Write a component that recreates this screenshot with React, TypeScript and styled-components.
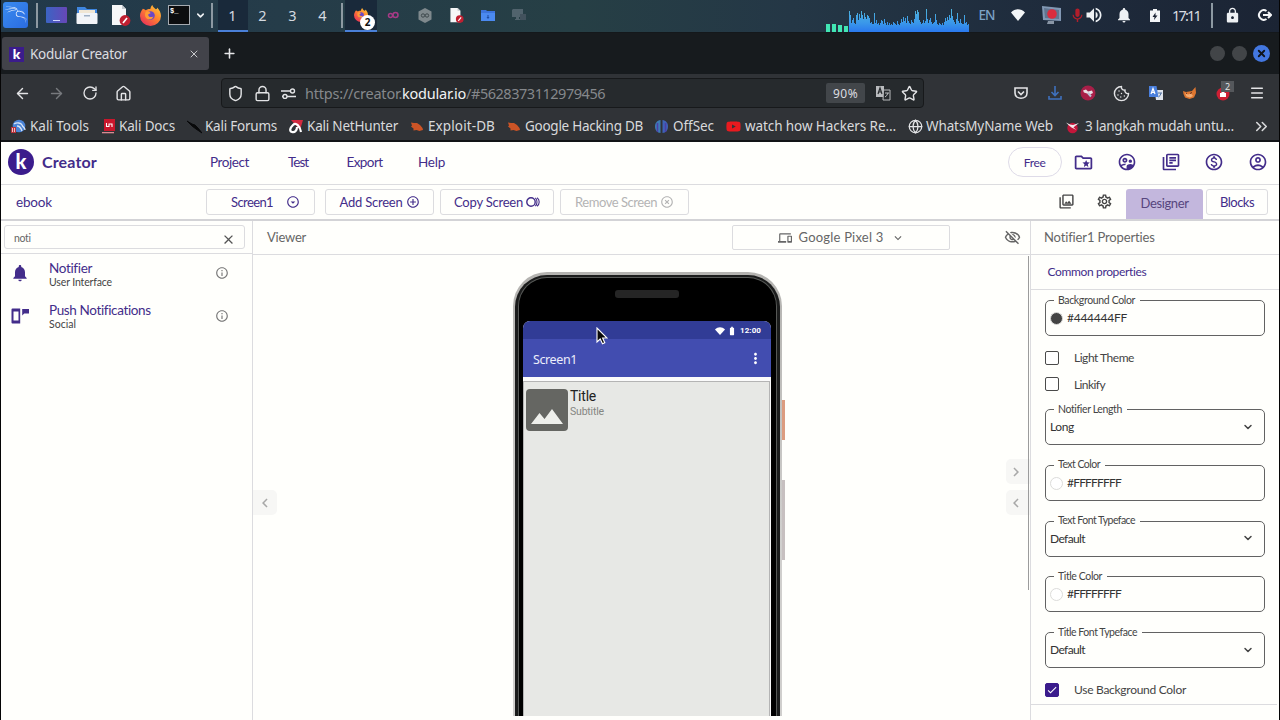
import React, { useLayoutEffect, useRef, useState } from "react";
import styled, { createGlobalStyle } from "styled-components";
import {
  ArrowLeft, ArrowRight, RotateCw, House, Shield, Lock, Star, Globe, Menu,
  ChevronsRight, X, Plus, ChevronDown, Cookie,
} from "lucide-react";
import {
  MdOutlineFolderSpecial, MdOutlineSupervisedUserCircle, MdOutlineLibraryBooks,
  MdOutlineMonetizationOn, MdOutlineAccountCircle, MdOutlinePhotoLibrary,
  MdOutlineSettings, MdOutlineVisibilityOff, MdDevices, MdExpandMore,
  MdNotifications, MdInfoOutline, MdAddCircleOutline, MdHighlightOff, MdClose,
  MdOutlineArrowDropDownCircle, MdChevronLeft, MdChevronRight, MdMoreVert,
  MdBatteryFull, MdLock, MdVolumeUp, MdMic, MdCheck,
} from "react-icons/md";
import { SiKalilinux } from "react-icons/si";
import { FaYoutube } from "react-icons/fa";

const ui = `"Noto Sans", sans-serif`;
const geo = `Lato, "Liberation Sans", sans-serif`;
const purple = "#432d8a";
const line = "#dcdcdf";
const paper = "#fffffc";

const Global = createGlobalStyle`
  *, *::before, *::after { box-sizing: border-box; }
  body { margin: 0; background: #000; overflow: hidden; }
  svg { display: block; flex: none; }
`;

/* ---------- text ---------- */

type TextProps = {
  $w: number; $size: number; $color?: string; $weight?: number; $font?: string; $ml?: number;
};

const TextBox = styled.span<TextProps>`
  display: block;
  flex: none;
  width: ${(p) => p.$w}px;
  margin-left: ${(p) => p.$ml ?? 0}px;
  font: ${(p) => p.$weight ?? 400} ${(p) => p.$size}px/1.25 ${(p) => p.$font ?? geo};
  color: ${(p) => p.$color ?? purple};
  white-space: nowrap;
`;

/* Tracks the label in or out so that it fills its column exactly. */
function Text({ children, ...rest }: TextProps & { children: string }) {
  const ref = useRef<HTMLSpanElement>(null);
  const [track, setTrack] = useState(0);
  useLayoutEffect(() => {
    const natural = ref.current!.getBoundingClientRect().width;
    setTrack((rest.$w - natural) / children.length);
  }, [children, rest.$w, rest.$size]);
  return (
    <TextBox {...rest}>
      <span ref={ref} style={{ letterSpacing: track }}>{children}</span>
    </TextBox>
  );
}

/* ---------- shell ---------- */

const Screen = styled.div`
  width: 1280px;
  height: 720px;
  border: solid #050505;
  border-width: 0 1px;
  display: flex;
  flex-direction: column;
  overflow: hidden;
`;

/* ---------- desktop panel ---------- */

const DesktopPanel = styled.div`
  flex: none;
  height: 33px;
  display: flex;
  align-items: stretch;
  border-bottom: 1px solid #14181b;
  background: linear-gradient(90deg, #22394a 0%, #253c49 22%, #263f45 45%, #243746 62%, #1f2c3d 80%, #1b2434 100%);
`;

const PanelCell = styled.div<{ $w: number; $active?: boolean; $flush?: boolean }>`
  position: relative;
  width: ${(p) => p.$w}px;
  flex: none;
  display: flex;
  align-items: ${(p) => (p.$flush ? "flex-end" : "center")};
  justify-content: center;
  color: #eef1f4;
  font: 15px ${ui};
  background: ${(p) => (p.$active ? "#19293a" : "transparent")};
  border-bottom: ${(p) => (p.$flush ? 0 : 2)}px solid ${(p) => (p.$active ? "#4a80d8" : "transparent")};
`;

const Workspace = styled(PanelCell)`
  padding-right: 1px;
  color: #d4dae0;
  font-size: 14.5px;
`;

const PanelRule = styled.div`
  width: 2px;
  height: 25px;
  background: #8d99a2;
`;

const Spacer = styled.div`flex: 1;`;

const KaliTile = styled.div`
  width: 25px;
  height: 26px;
  border-radius: 3px;
  background: linear-gradient(135deg, #3a8cf0, #2a6be0);
  color: #fff;
  display: grid;
  place-items: center;
`;

const DesktopTile = styled.div`
  width: 21px;
  height: 16px;
  border-radius: 1px;
  background: linear-gradient(90deg, #3b64c4, #6747b8);
  display: flex;
  align-items: flex-end;
  justify-content: center;
  padding-bottom: 2px;
  &::after { content: ""; width: 7px; height: 1px; background: #cfd6ff; }
`;

const TerminalTile = styled.div`
  width: 22px;
  height: 20px;
  border: 1px solid #a5aab0;
  background: #0c0d0f;
  color: #fff;
  font: 700 7px/9px "Liberation Mono", monospace;
  padding: 1px;
`;

const CountBadge = styled.div`
  position: absolute;
  left: 15px;
  top: 15px;
  width: 15px;
  height: 15px;
  border-radius: 50%;
  background: #fff;
  color: #111;
  font: 700 10px/15px ${ui};
  text-align: center;
`;

const CpuBars = styled.div`
  width: 23px;
  display: flex;
  align-items: flex-end;
  gap: 2px;
`;

const CpuBar = styled.i<{ $h: number }>`
  width: 4px;
  height: ${(p) => p.$h}px;
  background: #42e6b4;
`;

const load = [
  21, 17, 9, 12, 14, 9, 8, 17, 19, 12, 18, 14, 21, 17, 13, 19, 15, 13, 17, 16, 14, 9, 10, 8, 8, 19, 9, 12, 8, 9,
  7, 9, 12, 11, 8, 13, 9, 7, 10, 7, 9, 7, 8, 7, 10, 9, 8, 7, 11, 8, 7, 9, 13, 10, 15, 11, 14, 9, 16, 11,
  9, 8, 12, 10, 9, 13, 21, 18, 22, 20, 12, 10, 8, 9, 12, 9, 11, 23, 13, 9, 12, 14, 10, 8, 9, 10, 18, 12, 8, 7,
  9, 8, 7, 9, 7, 10, 14, 11, 15, 12, 17, 14, 23, 16, 12, 10, 8, 13, 19, 11, 9, 13, 9, 8, 8, 17, 9, 10, 7, 8,
];

function CpuGraph() {
  const d = load.map((h, i) => `L${i} ${24 - h}L${i + 1} ${24 - h}`).join("");
  return (
    <svg width="120" height="24" viewBox="0 0 120 24">
      <defs>
        <linearGradient id="cpu" x1="0" y1="0" x2="0" y2="1">
          <stop offset="0" stopColor="#4fb4dc" />
          <stop offset="0.6" stopColor="#3a98ea" />
          <stop offset="1" stopColor="#2a78ee" />
        </linearGradient>
      </defs>
      <path d={`M0 24${d}L120 24Z`} fill="url(#cpu)" />
    </svg>
  );
}

const FolderArt = () => (
  <svg width="22" height="20" viewBox="0 0 22 20">
    <path d="M1 2h8l2 2h10v6H1z" fill="#3f86e0" />
    <rect x="3" y="5" width="16" height="6" fill="#f0e6d4" />
    <rect x="0.500" y="8" width="21" height="11" rx="1" fill="#f2f4f8" />
    <rect x="8" y="10" width="6" height="1.500" fill="#9fb0c4" />
  </svg>
);

const DocArt = ({ size = 21 }: { size?: number }) => (
  <svg width={size} height={size} viewBox="0 0 21 21">
    <path d="M2 0h10l4 4v16H2z" fill="#f6f7f8" />
    <path d="M12 0l4 4h-4z" fill="#c5cacf" />
    <circle cx="15" cy="15.500" r="5.400" fill="#c01f31" />
    <path d="M13 18l4-5" stroke="#fff" strokeWidth="1.600" />
  </svg>
);

const FirefoxArt = ({ size = 21 }: { size?: number }) => (
  <svg width={size} height={size} viewBox="0 0 22 22">
    <defs>
      <linearGradient id="fx" x1="1" y1="0" x2="0.200" y2="1">
        <stop offset="0" stopColor="#ffd43a" />
        <stop offset="0.500" stopColor="#ff8030" />
        <stop offset="1" stopColor="#e8305a" />
      </linearGradient>
    </defs>
    <path d="M3 4c1 0 2 .6 3 1.500C8 4 10 4.500 11 4c0-1.500.8-3 2-4 .2 2 2 3 3.500 4.500C18 4 18 3 18 2.500c2.500 2.500 4 5.500 4 9A11 10.500 0 0 1 0 11.500C0 8.500 1.500 6 3 4z" fill="url(#fx)" />
    <circle cx="11" cy="11" r="4.500" fill="#6a48c8" />
    <path d="M6 7c2-1 5 0 5 2-2 0-3 1-2 2.500 1.500 2 4 1 5 .5-1 4-7 4-8.500 0C5 10 5.500 8 6 7z" fill="#ff9a35" />
  </svg>
);

const Desktop = () => (
  <DesktopPanel>
    <PanelCell $w={29}><KaliTile><SiKalilinux size={22} /></KaliTile></PanelCell>
    <PanelCell $w={13}><PanelRule /></PanelCell>
    <PanelCell $w={27}><DesktopTile /></PanelCell>
    <PanelCell $w={33}><FolderArt /></PanelCell>
    <PanelCell $w={34}><DocArt /></PanelCell>
    <PanelCell $w={27}><FirefoxArt /></PanelCell>
    <PanelCell $w={30}><TerminalTile>$_</TerminalTile></PanelCell>
    <PanelCell $w={12}><ChevronDown size={11} strokeWidth={3.500} /></PanelCell>
    <PanelCell $w={12}><PanelRule /></PanelCell>
    <Workspace $w={30} $active>1</Workspace>
    <Workspace $w={30}>2</Workspace>
    <Workspace $w={30}>3</Workspace>
    <Workspace $w={30}>4</Workspace>
    <PanelCell $w={7}><PanelRule /></PanelCell>
    <PanelCell $w={32} $active><FirefoxArt size={14} /><CountBadge>2</CountBadge></PanelCell>
    <PanelCell $w={32}>
      <svg width="12" height="12" viewBox="0 0 12 12" fill="none" stroke="#a63a86" strokeWidth="1.500">
        <circle cx="3.500" cy="6.500" r="2" /><circle cx="8.500" cy="6" r="2.500" />
      </svg>
    </PanelCell>
    <PanelCell $w={31}>
      <svg width="14" height="15" viewBox="0 0 14 15">
        <path d="M7 0l6.500 3.500v8L7 15 .5 11.500v-8z" fill="#7f898d" />
        <circle cx="5" cy="7.500" r="1.700" fill="none" stroke="#3d484c" /><circle cx="9" cy="7.500" r="1.700" fill="none" stroke="#3d484c" />
      </svg>
    </PanelCell>
    <PanelCell $w={33}><DocArt size={15} /></PanelCell>
    <PanelCell $w={29}>
      <svg width="14" height="12" viewBox="0 0 14 12">
        <path d="M0 1h5l1 1h8v10H0z" fill="#3c74dc" /><path d="M0 4h14v8H0z" fill="#4b8af0" /><path d="M5.500 8h3L7 10z M6.500 6h1v2h-1z" fill="#1d4aa0" />
      </svg>
    </PanelCell>
    <PanelCell $w={35}>
      <svg width="15" height="13" viewBox="0 0 15 13" fill="#51636d">
        <path d="M1 0h10v8H7v2h1v1H3v-1h1V8H0V1z" /><path d="M8 5h6v6H8z" fill="#42525d" />
      </svg>
    </PanelCell>
    <Spacer />
    <CpuBars><CpuBar $h={8} /><CpuBar $h={8} /><CpuBar $h={7} /><CpuBar $h={6} /></CpuBars>
    <PanelCell $w={120} $flush><CpuGraph /></PanelCell>
    <PanelCell $w={35}><Text $w={16} $size={13.500} $weight={500} $font={ui} $color="#7ba2c6">EN</Text></PanelCell>
    <PanelCell $w={28}>
      <svg width="14" height="12" viewBox="0 0 14 12"><path d="M7 12L0 3.500C4-.8 10-.8 14 3.500z" fill="#f3f5f7" /></svg>
    </PanelCell>
    <PanelCell $w={39}>
      <svg width="20" height="19" viewBox="0 0 20 19">
        <path d="M0 0l19 2v13L1 14z" fill="#8298b4" /><path d="M2 2l15 2v9L3 12z" fill="#61758f" />
        <circle cx="10" cy="8" r="4.800" fill="#db2c3d" /><path d="M6 15h6v3H5z" fill="#8995a5" />
      </svg>
    </PanelCell>
    <PanelCell $w={12}><MdMic size={17} color="#b31e2b" /></PanelCell>
    <PanelCell $w={22}><MdVolumeUp size={20} /></PanelCell>
    <PanelCell $w={37}><MdNotifications size={18} /></PanelCell>
    <PanelCell $w={26}>
      <svg width="10" height="13" viewBox="0 0 10 13">
        <path d="M3 0h4v1.500h3V13H0V1.500h3z" fill="#f3f5f7" /><path d="M5.500 3.500L2.500 8h2l-.5 3L7.500 6.500h-2z" fill="#1d2535" />
      </svg>
    </PanelCell>
    <PanelCell $w={36}><Text $w={28} $size={14.5} $font={ui} $color="#d9dde2">17:11</Text></PanelCell>
    <PanelCell $w={16}><PanelRule /></PanelCell>
    <PanelCell $w={24}><MdLock size={17} /></PanelCell>
    <PanelCell $w={35}>
      <svg width="20" height="12" viewBox="-6 0 20 12" fill="none" stroke="#f3f5f7" strokeWidth="2">
        <path d="M8.500 2A4.800 4.800 0 1 0 8.500 10" /><path d="M5 6h8M10 3l3 3-3 3" />
      </svg>
    </PanelCell>
  </DesktopPanel>
);

/* ---------- browser chrome ---------- */

const TabStrip = styled.div`
  flex: none;
  height: 41px;
  background: #171b1e;
  display: flex;
  align-items: center;
  padding: 0 9px 0 1px;
  color: #e6e7e9;
`;

const Tab = styled.div`
  width: 207px;
  height: 33px;
  border-radius: 3px;
  background: #42434a;
  display: flex;
  align-items: center;
  padding: 1px 9px 0 7px;
  margin-right: 13px;
`;

const Favicon = styled.div`
  width: 15px;
  height: 15px;
  background: #3b1c8c;
  color: #fff;
  font: 900 14px/14px ${geo};
  text-align: center;
`;

const WindowDot = styled.div<{ $close?: boolean }>`
  width: ${(p) => (p.$close ? 17 : 15)}px;
  height: ${(p) => (p.$close ? 17 : 15)}px;
  margin-left: ${(p) => (p.$close ? 6 : 7)}px;
  border-radius: 50%;
  display: grid;
  place-items: center;
  background: ${(p) => (p.$close ? "#4377e0" : "#424548")};
  color: #10151c;
`;

const NavBar = styled.div`
  flex: none;
  height: 37px;
  background: #303337;
  display: flex;
  align-items: center;
  padding: 1px 0 0 5px;
  color: #e3e4e6;
`;

const NavSlot = styled.div<{ $w?: number; $dim?: boolean }>`
  position: relative;
  width: ${(p) => p.$w ?? 33.7}px;
  flex: none;
  display: grid;
  place-items: center;
  color: ${(p) => (p.$dim ? "#777a7e" : "inherit")};
`;

const Extensions = styled.div`
  display: flex;
  align-items: center;
  margin-left: 80px;
`;

const UrlBox = styled.div`
  width: 703px;
  height: 30px;
  margin-left: 81px;
  border: 1px solid #17191b;
  border-radius: 4px;
  background: #262a2d;
  display: flex;
  align-items: center;
`;

const ZoomPill = styled.div`
  width: 39px;
  height: 20px;
  margin-left: 221px;
  border-radius: 2px;
  background: #42464a;
  display: flex;
  align-items: center;
  justify-content: center;
`;

const MiniBadge = styled.div`
  position: absolute;
  left: 15px;
  top: -5px;
  width: 13px;
  height: 11px;
  background: #55585c;
  font: 9px/11px ${ui};
  text-align: center;
`;

const Bookmarks = styled.div`
  flex: none;
  height: 31px;
  background: #303337;
  border-bottom: 2px solid #121416;
  display: flex;
  align-items: center;
  padding: 1px 0 0 10px;
`;

const BookmarkIcon = styled.div`
  width: 15px;
  height: 15px;
  flex: none;
  display: grid;
  place-items: center;
  color: #e3e4e6;
`;

const BookmarkItem = styled.div<{ $gap: number }>`
  display: flex;
  align-items: center;
  margin-left: ${(p) => p.$gap}px;
`;

const Blob = ({ kind }: { kind: string }) => (
  <svg width="15" height="15" viewBox="0 0 15 15">
    {kind === "tools" && (<>
      <circle cx="8" cy="7" r="6.300" fill="#4a83d6" />
      <path d="M3 5c3-2 7-1 8 1 1 3 3 2 3 5M6 7c3 0 4 2 5 5" stroke="#d7e4f7" strokeWidth="1.300" fill="none" />
      <path d="M0 8h5v6H0z" fill="#b8323c" /><path d="M1.500 9v4M3.500 9v4" stroke="#fff" strokeWidth=".7" />
    </>)}
    {kind === "docs" && (<>
      <path d="M3 0h11v12H3z" fill="#c9172c" /><path d="M1 13h12v1.300H1z" fill="#d98a92" />
      <path d="M5.500 4v3.500H8V5h3v3" stroke="#fff" strokeWidth="1.100" fill="none" />
    </>)}
    {kind === "forums" && <path d="M0 2l5 3 3 1 3 3 4 5-6-4-4-3z" fill="#08090a" stroke="#08090a" strokeWidth="1" />}
    {kind === "net" && (<>
      <path d="M3 1h12L12 11z" fill="#d22a40" /><path d="M13 13C12 7 8 3 5 6s-4 6-1 7 5-2 5-5" stroke="#fff" strokeWidth="2.200" fill="none" />
    </>)}
    {kind === "bug" && <path d="M2 3.500l3 .5 3 0 3 2 2.500 3 .5 2-2 .5-1.500.5-3-1-3 .5 0-2-2.500-2 1-1z" fill="#cc5426" />}
    {kind === "off" && (<>
      <path d="M6.500 1v13C3 14 1 11 1 7.500S3 1.500 6.500 1z" fill="#3d7ab4" /><path d="M8.500 1v13c3.500 0 5.500-3 5.500-6.500S12 1.500 8.500 1z" fill="#3e63b8" />
      <path d="M3.500 4v9M11.500 4v9" stroke="#4b3fa6" strokeWidth="1.500" />
    </>)}
    {kind === "bird" && (<>
      <circle cx="7.500" cy="9" r="5.200" fill="#c3163a" />
      <path d="M1 3.500l4 2 3 .5 6-2-4.500 3.500-1 1 3 2.500-5-2.500-2.500-2z" fill="#f3e9ec" />
    </>)}
  </svg>
);

const bookmarks: { label: string; w: number; gap: number; kind: string; tg: number }[] = [
  { label: "Kali Tools", w: 59, gap: 0, kind: "tools", tg: 4 },
  { label: "Kali Docs", w: 56, gap: 12, kind: "docs", tg: 3 },
  { label: "Kali Forums", w: 72, gap: 12, kind: "forums", tg: 3 },
  { label: "Kali NetHunter", w: 91, gap: 11, kind: "net", tg: 4 },
  { label: "Exploit-DB", w: 67, gap: 11, kind: "bug", tg: 4 },
  { label: "Google Hacking DB", w: 118, gap: 11, kind: "bug", tg: 4 },
  { label: "OffSec", w: 41, gap: 11, kind: "off", tg: 4 },
  { label: "watch how Hackers Re…", w: 151, gap: 11.5, kind: "yt", tg: 4.5 },
  { label: "WhatsMyName Web", w: 127, gap: 12, kind: "globe", tg: 3 },
  { label: "3 langkah mudah untu…", w: 149, gap: 12, kind: "bird", tg: 5 },
];

const Browser = () => (
  <>
    <TabStrip>
      <Tab>
        <Favicon>k</Favicon>
        <Text $w={97} $size={13.5} $font={ui} $color="#dcdde0" $ml={6}>Kodular Creator</Text>
        <Spacer />
        <X size={12} strokeWidth={2} color="#c9cacd" />
      </Tab>
      <Plus size={15} strokeWidth={2.5} />
      <Spacer />
      <WindowDot /><WindowDot /><WindowDot $close><X size={11} strokeWidth={4} /></WindowDot>
    </TabStrip>
    <NavBar>
      <NavSlot><ArrowLeft size={17} /></NavSlot>
      <NavSlot $dim><ArrowRight size={17} /></NavSlot>
      <NavSlot><RotateCw size={16} /></NavSlot>
      <NavSlot $w={33}><House size={17} /></NavSlot>
      <UrlBox>
        <NavSlot $w={27}><Shield size={17} /></NavSlot>
        <NavSlot $w={26}><Lock size={17} /></NavSlot>
        <NavSlot $w={26}>
          <svg width="15" height="11" viewBox="0 0 15 11" fill="none" stroke="#e3e4e6" strokeWidth="1.400">
            <path d="M0 3h9M6 8.500h9M1 8.500h1" /><circle cx="11.500" cy="3" r="2" /><circle cx="4" cy="8.500" r="2" />
          </svg>
        </NavSlot>
        <Text $w={97} $size={14.5} $font={ui} $color="#85888c" $ml={4}>https://creator.</Text>
        <Text $w={64} $size={14.5} $font={ui} $color="#f1f2f3">kodular.io</Text>
        <Text $w={139} $size={14.5} $font={ui} $color="#85888c">/#5628373112979456</Text>
        <ZoomPill><Text $w={25} $size={12} $font={ui} $color="#dcdde0">90%</Text></ZoomPill>
        <NavSlot $w={36}>
          <svg width="16" height="16" viewBox="0 0 16 16">
            <path d="M1 1h8v11H1z" fill="#b9bbbe" /><path d="M3 9l2-6 2 6M3.500 7h3" stroke="#262a2d" strokeWidth="1.200" fill="none" />
            <path d="M8.500 5h6.500v10H8z" fill="#262a2d" stroke="#b9bbbe" /><path d="M10 8h4M13 8q-1 3-3 4M11 8" stroke="#b9bbbe" fill="none" />
          </svg>
        </NavSlot>
        <NavSlot $w={17}><Star size={17} /></NavSlot>
      </UrlBox>
      <Extensions>
        <NavSlot>
          <svg width="14" height="13" viewBox="0 0 14 13" fill="none" stroke="#e3e4e6" strokeWidth="1.600">
            <path d="M1 1h12v5c0 7-12 7-12 0z" /><path d="M4 4.500l3 3 3-3" />
          </svg>
        </NavSlot>
        <NavSlot>
          <svg width="14" height="14" viewBox="0 0 14 14" fill="none" stroke="#3f71bd" strokeWidth="1.600">
            <path d="M7 0v9M3.500 6L7 9.500 10.500 6M1 10v3h12v-3" />
          </svg>
        </NavSlot>
        <NavSlot>
          <svg width="16" height="16" viewBox="0 0 16 16">
            <circle cx="8" cy="8" r="7.500" fill="#a81f48" />
            <path d="M3 5.500l3-1 2 2 4-1 1 2.500-3 1.500-3-1-3-1z" fill="#e9dfe5" /><path d="M8 8l3 3.500" stroke="#b9c4d8" strokeWidth="2" />
          </svg>
        </NavSlot>
        <NavSlot><Cookie size={17} /></NavSlot>
        <NavSlot>
          <svg width="16" height="16" viewBox="0 0 16 16">
            <path d="M6.500 5H15v10H8z" fill="#dfe4ec" /><path d="M1 1h7.500l2 11H1z" fill="#4a7fdc" />
            <path d="M3 9l2-5.500L7 9M3.600 7.300h2.800" stroke="#fff" strokeWidth="1.200" fill="none" />
            <path d="M10 8h4M13 8q-.5 3-2.500 4" stroke="#51719f" fill="none" />
          </svg>
        </NavSlot>
        <NavSlot>
          <svg width="15" height="14" viewBox="0 0 15 14"><path d="M1 5l3 1 6-1 3.500-4L14 7l-2 4.500L7.500 13 3 11.500 1.500 8z" fill="#dd7630" /><path d="M3 7l3 1.500 3-1 2 2.500-3 1.500-3.500-1z" fill="#f3ad73" /><path d="M8 7.500l2-1M4 7l1 .6" stroke="#61301c" /></svg>
        </NavSlot>
        <NavSlot>
          <svg width="15" height="15" viewBox="0 0 15 15"><circle cx="7" cy="8" r="6.500" fill="#cd1f34" /><path d="M4 7h6v4H4zM5.500 5h3v2h-3z" fill="#fff" /></svg>
          <MiniBadge>2</MiniBadge>
        </NavSlot>
        <NavSlot><Menu size={16} strokeWidth={2.2} /></NavSlot>
      </Extensions>
    </NavBar>
    <Bookmarks>
      {bookmarks.map((b) => (
        <BookmarkItem key={b.label} $gap={b.gap}>
          <BookmarkIcon>
            {b.kind === "yt" ? <FaYoutube size={15} color="#e81a1f" /> : b.kind === "globe" ? <Globe size={15} /> : <Blob kind={b.kind} />}
          </BookmarkIcon>
          <Text $w={b.w} $size={13.5} $font={ui} $color="#d9dadc" $ml={b.tg}>{b.label}</Text>
        </BookmarkItem>
      ))}
      <NavSlot $w={54}><ChevronsRight size={19} color="#d9dadc" /></NavSlot>
    </Bookmarks>
  </>
);

/* ---------- creator app ---------- */

const AppArea = styled.div`
  flex: 1;
  min-height: 0;
  background: ${paper};
  display: flex;
  flex-direction: column;
`;

const Header = styled.header`
  flex: none;
  height: 43px;
  border-bottom: 1px solid ${line};
  display: flex;
  align-items: center;
  padding: 0 10px 2px 7px;
  color: ${purple};
`;

const Logo = styled.div`
  width: 26px;
  height: 26px;
  border-radius: 50%;
  background: #3b1c8c;
  color: #fff;
  font: 900 20px/24px ${geo};
  text-align: center;
`;

const FreePill = styled.div`
  width: 54px;
  height: 30px;
  border: 1px solid #dedbe8;
  border-radius: 15px;
  display: flex;
  align-items: center;
  justify-content: center;
  margin-right: 11px;
`;

const HeaderIcons = styled.div`
  display: flex;
  gap: 21.6px;
`;

const HeaderIcon = styled.div`
  width: 22px;
  display: grid;
  place-items: center;
`;

const ProjectBar = styled.div`
  flex: none;
  height: 36px;
  border-bottom: 2px solid #d3d3d6;
  display: flex;
  align-items: center;
  padding: 0 11px 0 15px;
`;

const OutlineButton = styled.div<{ $w: number; $ml: number; $gap?: number; $off?: boolean }>`
  width: ${(p) => p.$w}px;
  height: 26px;
  margin-left: ${(p) => p.$ml}px;
  border: 1px solid ${line};
  border-radius: 3px;
  display: flex;
  align-items: center;
  justify-content: center;
  gap: ${(p) => p.$gap ?? 3}px;
  color: ${(p) => (p.$off ? "#b4b4b4" : purple)};
`;

const BarIcons = styled.div`
  display: flex;
  align-items: center;
  gap: 21px;
  padding-bottom: 2px;
  color: #444;
`;

const ModeTab = styled.div`
  align-self: flex-end;
  width: 77px;
  height: 30px;
  margin-left: 13px;
  padding-bottom: 1px;
  border-radius: 3px 3px 0 0;
  background: #c3b7dd;
  display: flex;
  align-items: center;
  justify-content: center;
`;

const Columns = styled.div`
  flex: 1;
  min-height: 0;
  display: flex;
`;

const Palette = styled.aside`
  width: 252px;
  border-right: 1px solid ${line};
`;

const SearchRow = styled.div`
  height: 33px;
  padding: 4px 7px 0 3px;
  border-bottom: 1px solid ${line};
`;

const SearchBox = styled.div`
  height: 24px;
  border: 1px solid ${line};
  border-radius: 3px;
  display: flex;
  align-items: center;
  justify-content: space-between;
  padding: 4px 8px 0 9px;
`;

const PaletteList = styled.div`
  margin-top: -2px;
`;

const PaletteItem = styled.div`
  height: 42.4px;
  display: flex;
  align-items: center;
  padding: 0 23px 0 8px;
  color: ${purple};
`;

const PaletteIcon = styled.div`
  width: 22px;
  display: grid;
  place-items: center;
`;

const PaletteText = styled.div`
  flex: 1;
  padding: 2px 0 0 18px;
  display: flex;
  flex-direction: column;
  & > :last-child { margin-top: -1px; }
`;

const Viewer = styled.main`
  position: relative;
  width: 778px;
  border-right: 1px solid ${line};
`;

const ViewerHead = styled.div`
  height: 34px;
  border-bottom: 1px solid ${line};
  display: flex;
  align-items: center;
  padding: 0 9px 0 14px;
  color: #666;
`;

const DeviceSelect = styled.div`
  width: 218px;
  height: 25px;
  margin-left: 426px;
  border: 1px solid ${line};
  border-radius: 2px;
  display: flex;
  align-items: center;
  justify-content: center;
  gap: 7px;
`;

const Handle = styled.div<{ $side: "left" | "right"; $top: number }>`
  position: absolute;
  ${(p) => p.$side}: 0;
  top: ${(p) => p.$top}px;
  width: 24px;
  height: 25px;
  padding-right: ${(p) => (p.$side === "left" ? 0 : 4)}px;
  border-radius: ${(p) => (p.$side === "left" ? "0 5px 5px 0" : "5px 0 0 5px")};
  background: #f7f7f5;
  color: #a8a8a8;
  display: grid;
  place-items: center;
`;

const ScrollThumb = styled.div`
  position: absolute;
  right: 1px;
  top: 35px;
  width: 1px;
  height: 334px;
  background: #9c9c9c;
`;

const PhoneBody = styled.div`
  position: relative;
  width: 269px;
  height: 444px;
  margin: 17px 0 0 260px;
  padding: 3px 2px 0;
  border-radius: 34px 34px 0 0;
  background: linear-gradient(#b4b3b0, #d0cfcd 60%);
`;

const PhoneRim = styled.div`
  height: 100%;
  padding: 2px 3px 0;
  border-radius: 32px 32px 0 0;
  background: #1b1c1c;
`;

const PhoneRing = styled.div`
  height: 100%;
  padding: 1px 1px 0;
  border-radius: 29px 29px 0 0;
  background: #565856;
`;

const PhoneGlass = styled.div`
  height: 100%;
  padding: 12px 5px 0 4px;
  border-radius: 28px 28px 0 0;
  background: #000;
  display: flex;
  flex-direction: column;
`;

const Speaker = styled.div`
  flex: none;
  align-self: center;
  width: 64px;
  height: 8px;
  border-radius: 3px;
  background: #252525;
  margin-bottom: 23px;
`;

const SideButton = styled.div<{ $top: number; $h: number; $c: string }>`
  position: absolute;
  right: -3px;
  top: ${(p) => p.$top}px;
  width: 3px;
  height: ${(p) => p.$h}px;
  background: ${(p) => p.$c};
`;

const PhoneScreen = styled.div`
  flex: 1;
  background: #fbfbfb;
  border-radius: 7px 7px 0 0;
  overflow: hidden;
  display: flex;
  flex-direction: column;
`;

const StatusBar = styled.div`
  height: 18px;
  background: #313c96;
  display: flex;
  align-items: center;
  justify-content: flex-end;
  gap: 2px;
  padding: 2px 10px 0 0;
  color: #fff;
`;

const ActionBar = styled.div`
  height: 38px;
  background: #424db0;
  display: flex;
  align-items: center;
  justify-content: space-between;
  padding: 0 7px 0 10px;
  color: #fff;
  & > :first-child { margin-top: 3px; }
`;

const Canvas = styled.div`
  flex: 1;
  margin: 4px 1px 0 0;
  border: 1px solid #b4b4b4;
  border-bottom: 0;
  background: #e7e8e5;
  display: flex;
  align-items: flex-start;
  gap: 2px;
  padding: 7px 2px;
`;

const Thumb = styled.div`
  width: 42px;
  height: 42px;
  border-radius: 4px;
  background: #656662;
  display: grid;
  place-items: end center;
  padding-bottom: 6px;
`;

const ThumbText = styled.div`
  margin-top: -1.5px;
`;

const Pointer = styled.svg`
  position: absolute;
  left: 343px;
  top: 106px;
`;

const Properties = styled.aside`
  flex: 1;
`;

const PropHead = styled.div`
  height: 34px;
  border-bottom: 1px solid ${line};
  display: flex;
  align-items: center;
  padding-left: 13px;
`;

const PropSection = styled.div`
  height: 35px;
  border-bottom: 1px solid ${line};
  display: flex;
  align-items: center;
  padding: 0 0 2px 16.5px;
`;

const PropList = styled.div`
  height: 415px;
  margin-right: 2px;
  padding: 10px 12px 0 13px;
  border-bottom: 1px solid ${line};
`;

const Field = styled.div`
  position: relative;
  height: 36px;
  margin: 0 0 19.7px 1px;
  width: 220px;
  border: 1px solid #626262;
  border-radius: 5px;
  display: flex;
  align-items: center;
  padding: 0 10px 1px 4px;
`;

const FieldLabel = styled.div`
  position: absolute;
  top: -7.5px;
  left: 8px;
  padding: 0 5px 0 4px;
  background: ${paper};
`;

const Swatch = styled.div<{ $c: string }>`
  width: 13px;
  height: 13px;
  border-radius: 50%;
  background: ${(p) => p.$c};
  border: 1px solid #dcdcda;
  margin-right: 4px;
  margin-top: 2px;
`;

const CheckRow = styled.div`
  height: 26.5px;
  display: flex;
  align-items: center;
`;

const Checks = styled.div`margin: -11.2px 0 11.8px;`;

const Box = styled.div<{ $on?: boolean }>`
  width: 14px;
  height: 14px;
  border: 1px solid ${(p) => (p.$on ? "#3b1c8c" : "#4a4a4a")};
  border-radius: 2px;
  background: ${(p) => (p.$on ? "#3b1c8c" : "#fff")};
  color: #fff;
  margin: 0 15px 0 1px;
  display: grid;
  place-items: center;
`;

type FieldData = { label: string; lw: number; value: string; vw: number; color?: string };

const PropField = ({ label, lw, value, vw, color }: FieldData) => (
  <Field>
    <FieldLabel><Text $w={lw} $size={10.5} $color="#444">{label}</Text></FieldLabel>
    {color && <Swatch $c={color} />}
    <Text $w={vw} $size={12} $color="#333">{value}</Text>
    <Spacer />
    {!color && <ChevronDown size={12} strokeWidth={3} color="#444" />}
  </Field>
);

const fields: FieldData[] = [
  { label: "Notifier Length", lw: 64, value: "Long", vw: 24 },
  { label: "Text Color", lw: 42, value: "#FFFFFFFF", vw: 54, color: "#fff" },
  { label: "Text Font Typeface", lw: 77, value: "Default", vw: 35 },
  { label: "Title Color", lw: 44, value: "#FFFFFFFF", vw: 54, color: "#fff" },
  { label: "Title Font Typeface", lw: 79, value: "Default", vw: 35 },
];

const PushIcon = () => (
  <svg width="18" height="16" viewBox="0 0 18 16">
    <path d="M1.500 0.500H9.200v15H1.500a1 1 0 0 1-1-1v-13a1 1 0 0 1 1-1zM2.500 3.500v9h5v-9z" fillRule="evenodd" fill={purple} />
    <path d="M11.200 1h6.800v4.500h-4.800l-2 2z" fill={purple} />
  </svg>
);

const CopyIcon = () => (
  <svg width="14" height="12" viewBox="0 0 14 12" fill="none" stroke={purple} strokeWidth="1.400">
    <circle cx="5" cy="6" r="4.200" /><path d="M9.300 1.800q1.700 1.500 1.700 4.200t-1.700 4.200M11 1.800q2.200 1.500 2.200 4.200t-2.200 4.200" strokeWidth="1.100" />
  </svg>
);

const menu = [
  { label: "Project", w: 39, ml: 113 },
  { label: "Test", w: 20, ml: 39 },
  { label: "Export", w: 36, ml: 38.5 },
  { label: "Help", w: 27, ml: 35.5 },
];

const Creator = () => (
  <AppArea>
    <Header>
      <Logo>k</Logo>
      <Text $w={55} $size={16} $weight={700} $ml={8}>Creator</Text>
      {menu.map((m) => <Text key={m.label} $w={m.w} $size={13.5} $ml={m.ml}>{m.label}</Text>)}
      <Spacer />
      <FreePill><Text $w={22} $size={12}>Free</Text></FreePill>
      <HeaderIcons>
        <HeaderIcon><MdOutlineFolderSpecial size={21} /></HeaderIcon>
        <HeaderIcon><MdOutlineSupervisedUserCircle size={20} /></HeaderIcon>
        <HeaderIcon><MdOutlineLibraryBooks size={20} /></HeaderIcon>
        <HeaderIcon><MdOutlineMonetizationOn size={20} /></HeaderIcon>
        <HeaderIcon><MdOutlineAccountCircle size={20} /></HeaderIcon>
      </HeaderIcons>
    </Header>
    <ProjectBar>
      <Text $w={36} $size={13.5}>ebook</Text>
      <OutlineButton $w={109} $ml={154} $gap={13}>
        <Text $w={42} $size={13} $ml={10}>Screen1</Text><MdOutlineArrowDropDownCircle size={14} />
      </OutlineButton>
      <OutlineButton $w={109} $ml={10}>
        <Text $w={63} $size={13}>Add Screen</Text><MdAddCircleOutline size={14} />
      </OutlineButton>
      <OutlineButton $w={114} $ml={6}>
        <Text $w={69} $size={13}>Copy Screen</Text><CopyIcon />
      </OutlineButton>
      <OutlineButton $w={129} $ml={6} $off>
        <Text $w={82} $size={13} $color="#b4b4b4">Remove Screen</Text><MdHighlightOff size={14} />
      </OutlineButton>
      <Spacer />
      <BarIcons><MdOutlinePhotoLibrary size={17} /><MdOutlineSettings size={17} /></BarIcons>
      <ModeTab><Text $w={48} $size={13} $color="#57467e">Designer</Text></ModeTab>
      <OutlineButton $w={62} $ml={3}><Text $w={34} $size={13}>Blocks</Text></OutlineButton>
    </ProjectBar>
    <Columns>
      <Palette>
        <SearchRow>
          <SearchBox>
            <Text $w={17} $size={10.5} $color="#666">noti</Text>
            <MdClose size={15} color="#555" />
          </SearchBox>
        </SearchRow>
        <PaletteList>
          <PaletteItem>
            <PaletteIcon><MdNotifications size={20} /></PaletteIcon>
            <PaletteText>
              <Text $w={43} $size={13.5}>Notifier</Text>
              <Text $w={63} $size={10.5} $color="#444">User Interface</Text>
            </PaletteText>
            <MdInfoOutline size={14} color="#777" />
          </PaletteItem>
          <PaletteItem>
            <PaletteIcon><PushIcon /></PaletteIcon>
            <PaletteText>
              <Text $w={102} $size={13.5}>Push Notifications</Text>
              <Text $w={27} $size={10.5} $color="#444">Social</Text>
            </PaletteText>
            <MdInfoOutline size={14} color="#777" />
          </PaletteItem>
        </PaletteList>
      </Palette>
      <Viewer>
        <ViewerHead>
          <Text $w={39} $size={13} $color="#666">Viewer</Text>
          <DeviceSelect>
            <MdDevices size={14} />
            <Text $w={85} $size={13} $color="#666">Google Pixel 3</Text>
            <MdExpandMore size={14} />
          </DeviceSelect>
          <Spacer />
          <MdOutlineVisibilityOff size={17} />
        </ViewerHead>
        <PhoneBody>
          <SideButton $top={128} $h={40} $c="#dc9c80" />
          <SideButton $top={208} $h={80} $c="#c7c0c0" />
          <PhoneRim><PhoneRing><PhoneGlass>
            <Speaker />
            <PhoneScreen>
              <StatusBar>
                <svg width="10" height="8" viewBox="0 0 10 8"><path d="M5 8L0 2.500C3-.6 7-.6 10 2.500z" fill="#fff" /></svg>
                <MdBatteryFull size={10} />
                <Text $w={21} $size={8} $weight={700} $font="Roboto, sans-serif" $color="#fff" $ml={1}>12:00</Text>
              </StatusBar>
              <ActionBar>
                <Text $w={44} $size={12.5} $font={ui} $color="#eceefb">Screen1</Text>
                <MdMoreVert size={17} />
              </ActionBar>
              <Canvas>
                <Thumb>
                  <svg width="32" height="16" viewBox="0 0 32 16"><path d="M0 15L8.500 4l5 6L21 0l11 15z" fill="#eeefeb" /></svg>
                </Thumb>
                <ThumbText>
                  <Text $w={26} $size={14} $font="Roboto, sans-serif" $color="#222">Title</Text>
                  <Text $w={34} $size={10.5} $font="Roboto, sans-serif" $color="#858682">Subtitle</Text>
                </ThumbText>
              </Canvas>
            </PhoneScreen>
          </PhoneGlass></PhoneRing></PhoneRim>
        </PhoneBody>
        <Pointer width="12" height="18" viewBox="0 0 12 18">
          <path d="M1 1v14l3.200-3 2.300 4.700 2.300-1L6.600 11H11z" fill="#0a0a0a" stroke="#fff" strokeWidth="1.100" />
        </Pointer>
        <Handle $side="left" $top={269}><MdChevronLeft size={18} /></Handle>
        <Handle $side="right" $top={238}><MdChevronRight size={18} /></Handle>
        <Handle $side="right" $top={269}><MdChevronLeft size={18} /></Handle>
        <ScrollThumb />
      </Viewer>
      <Properties>
        <PropHead><Text $w={111} $size={13} $color="#666">Notifier1 Properties</Text></PropHead>
        <PropSection><Text $w={99} $size={12}>Common properties</Text></PropSection>
        <PropList>
          <PropField label="Background Color" lw={77} value="#444444FF" vw={60} color="#444" />
          <Checks>
            <CheckRow><Box /><Text $w={60} $size={12} $color="#444">Light Theme</Text></CheckRow>
            <CheckRow><Box /><Text $w={31} $size={12} $color="#444">Linkify</Text></CheckRow>
          </Checks>
          {fields.map((f) => <PropField key={f.label} {...f} />)}
          <Checks>
            <CheckRow><Box $on><MdCheck size={12} /></Box><Text $w={112} $size={12} $color="#444">Use Background Color</Text></CheckRow>
          </Checks>
        </PropList>
      </Properties>
    </Columns>
  </AppArea>
);

export default function App() {
  return (
    <Screen>
      <Global />
      <Desktop />
      <Browser />
      <Creator />
    </Screen>
  );
}
